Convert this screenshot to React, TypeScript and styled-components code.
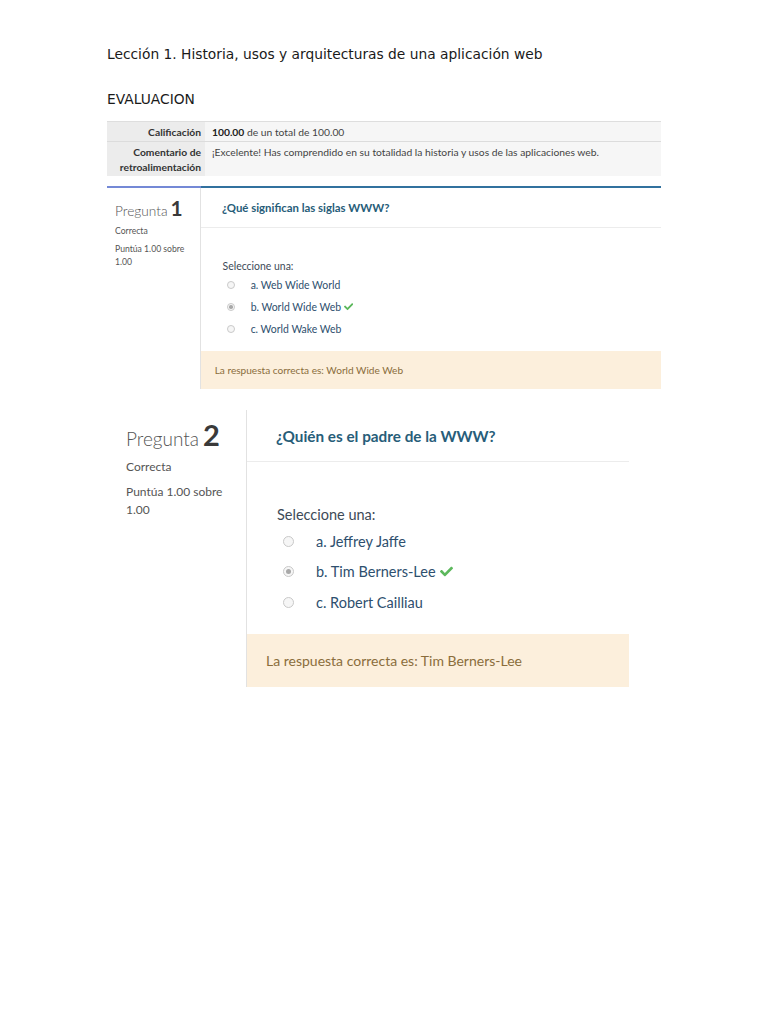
import React from "react";
import styled, { createGlobalStyle } from "styled-components";
import { FaCheck } from "react-icons/fa";

const Global = createGlobalStyle`
  html, body { margin: 0; padding: 0; background: #ffffff; }
  body { font-family: "DejaVu Sans", sans-serif; }
`;

const Page = styled.div`
  width: 768px;
  min-height: 1024px;
  padding: 45px 0 0 107px;
  box-sizing: border-box;
  display: flex;
  flex-direction: column;
`;

const DocText = styled.p<{ $mt: number }>`
  margin: ${(p) => p.$mt}px 0 0 0;
  font-family: "DejaVu Sans", sans-serif;
  font-size: 13.8px;
  line-height: 18px;
  color: #1a1a1a;
`;

const Shot = styled.div<{ $w: number; $mt: number; $ml: number }>`
  width: ${(p) => p.$w}px;
  margin-top: ${(p) => p.$mt}px;
  margin-left: ${(p) => p.$ml}px;
  font-family: Lato, "Open Sans", sans-serif;
  display: flex;
  flex-direction: column;
`;

const Summary = styled.div`
  display: grid;
  grid-template-columns: 98px 1fr;
  border-top: 1px solid #dedede;
  font-size: 10.3px;
  color: #333;
`;

const SumLabel = styled.div<{ $h: number; $top?: boolean }>`
  background: #ececec;
  height: ${(p) => p.$h}px;
  box-sizing: border-box;
  padding: 3px 4px 0 0;
  text-align: right;
  font-weight: 700;
  line-height: 15px;
  border-top: ${(p) => (p.$top ? "1px solid #dcdcdc" : "none")};
`;

const SumValue = styled.div<{ $h: number; $top?: boolean }>`
  background: #f6f6f6;
  height: ${(p) => p.$h}px;
  box-sizing: border-box;
  padding: 3px 0 0 7px;
  line-height: 15px;
  color: #444;
  border-top: ${(p) => (p.$top ? "1px solid #dcdcdc" : "none")};
  b { color: #222; }
`;

const Question = styled.div<{ $left: number; $top: boolean; $mt: number }>`
  display: grid;
  grid-template-columns: ${(p) => p.$left}px 1fr;
  margin-top: ${(p) => p.$mt}px;
  border-top: ${(p) => (p.$top ? "2px solid #31719e" : "none")};
  position: relative;
`;

const TopAccent = styled.div<{ $w: number }>`
  position: absolute;
  left: 0;
  top: -2px;
  width: ${(p) => p.$w}px;
  height: 2px;
  background: #7489d6;
`;

const Info = styled.div<{ $k: number; $pl: number; $pt: number }>`
  border-right: 1px solid #e2e2e2;
  padding: ${(p) => p.$pt}px 0 0 ${(p) => p.$pl}px;
  display: flex;
  flex-direction: column;
`;

const QNo = styled.div<{ $k: number }>`
  font-size: ${(p) => 19 * p.$k}px;
  line-height: ${(p) => 28 * p.$k}px;
  color: #555;
  font-weight: 300;
  span {
    font-size: ${(p) => 29 * p.$k}px;
    font-weight: 700;
    color: #3a3a3a;
    margin-left: ${(p) => 4 * p.$k}px;
  }
`;

const State = styled.div<{ $k: number; $mt: number }>`
  margin-top: ${(p) => p.$mt * p.$k}px;
  font-size: ${(p) => 12 * p.$k}px;
  line-height: ${(p) => 18 * p.$k}px;
  color: #555;
`;

const Content = styled.div`
  display: flex;
  flex-direction: column;
`;

const QHead = styled.div<{ $k: number; $h: number; $fs: number }>`
  height: ${(p) => p.$h}px;
  box-sizing: border-box;
  border-bottom: 1px solid #ececec;
  display: flex;
  align-items: center;
  padding-left: ${(p) => 29 * p.$k}px;
  font-size: ${(p) => p.$fs}px;
  font-weight: 700;
  color: #275d79;
`;

const Body = styled.div<{ $k: number }>`
  padding: ${(p) => 43 * p.$k}px 0 0 ${(p) => 30 * p.$k}px;
  display: flex;
  flex-direction: column;
`;

const Prompt = styled.div<{ $k: number }>`
  font-size: ${(p) => 14.5 * p.$k}px;
  line-height: ${(p) => 20 * p.$k}px;
  color: #3d4a57;
  margin-bottom: ${(p) => 1 * p.$k}px;
`;

const Option = styled.div<{ $k: number }>`
  height: ${(p) => 30.5 * p.$k}px;
  display: flex;
  align-items: center;
  font-size: ${(p) => 14.5 * p.$k}px;
  color: #2e4f6e;
`;

const Radio = styled.span<{ $k: number; $on?: boolean }>`
  width: ${(p) => 11 * p.$k}px;
  height: ${(p) => 11 * p.$k}px;
  margin-left: ${(p) => 6 * p.$k}px;
  margin-right: ${(p) => 22 * p.$k}px;
  border-radius: 50%;
  border: 1px solid #c9c9c9;
  background: #f6f6f6;
  box-sizing: border-box;
  display: inline-flex;
  align-items: center;
  justify-content: center;
  &::after {
    content: "";
    display: ${(p) => (p.$on ? "block" : "none")};
    width: ${(p) => 5 * p.$k}px;
    height: ${(p) => 5 * p.$k}px;
    border-radius: 50%;
    background: #a8a8a8;
  }
`;

const Tick = styled(FaCheck)<{ $k: number }>`
  color: #5cb85c;
  width: ${(p) => 13 * p.$k}px;
  height: ${(p) => 13 * p.$k}px;
  margin-left: ${(p) => 4 * p.$k}px;
`;

const Feedback = styled.div<{ $k: number; $mt: number }>`
  margin-top: ${(p) => p.$mt}px;
  height: ${(p) => 53 * p.$k}px;
  background: #fcefdc;
  display: flex;
  align-items: center;
  padding-left: ${(p) => 19 * p.$k}px;
  font-size: ${(p) => 14 * p.$k}px;
  color: #8a6d3b;
`;

type Q = {
  n: number;
  k: number;
  left: number;
  pl: number;
  pt: number;
  head: number;
  qfs: number;
  fbMt: number;
  q: string;
  opts: string[];
  correct: number;
  answer: string;
};

const QuestionCard: React.FC<{ d: Q; top: boolean; mt: number }> = ({ d, top, mt }) => (
  <Question $left={d.left} $top={top} $mt={mt}>
    {top && <TopAccent $w={d.left} />}
    <Info $k={d.k} $pl={d.pl} $pt={d.pt}>
      <QNo $k={d.k}>
        Pregunta<span>{d.n}</span>
      </QNo>
      <State $k={d.k} $mt={5}>Correcta</State>
      <State $k={d.k} $mt={7}>
        Puntúa 1.00 sobre
        <br />
        1.00
      </State>
    </Info>
    <Content>
      <QHead $k={d.k} $h={d.head} $fs={d.qfs}>{d.q}</QHead>
      <Body $k={d.k}>
        <Prompt $k={d.k}>Seleccione una:</Prompt>
        {d.opts.map((o, i) => (
          <Option key={o} $k={d.k}>
            <Radio $k={d.k} $on={i === d.correct} />
            {o}
            {i === d.correct && <Tick $k={d.k} />}
          </Option>
        ))}
      </Body>
      <Feedback $k={d.k} $mt={d.fbMt}>La respuesta correcta es: {d.answer}</Feedback>
    </Content>
  </Question>
);

const q1: Q = {
  n: 1,
  k: 0.72,
  left: 94,
  pl: 8,
  pt: 10,
  head: 40,
  qfs: 11.4,
  fbMt: 11,
  q: "¿Qué significan las siglas WWW?",
  opts: ["a. Web Wide World", "b. World Wide Web", "c. World Wake Web"],
  correct: 1,
  answer: "World Wide Web",
};

const q2: Q = {
  n: 2,
  k: 1,
  left: 137,
  pl: 16,
  pt: 11,
  head: 52,
  qfs: 15.3,
  fbMt: 16,
  q: "¿Quién es el padre de la WWW?",
  opts: ["a. Jeffrey Jaffe", "b. Tim Berners-Lee", "c. Robert Cailliau"],
  correct: 1,
  answer: "Tim Berners-Lee",
};

export default function App() {
  return (
    <>
      <Global />
      <Page>
        <DocText $mt={0}>Lección 1. Historia, usos y arquitecturas de una aplicación web</DocText>
        <DocText $mt={27}>EVALUACION</DocText>
        <Shot $w={554} $mt={13} $ml={0}>
          <Summary>
            <SumLabel $h={19}>Calificación</SumLabel>
            <SumValue $h={19}>
              <b>100.00</b> de un total de 100.00
            </SumValue>
            <SumLabel $h={35} $top>
              Comentario de
              <br />
              retroalimentación
            </SumLabel>
            <SumValue $h={35} $top>
              ¡Excelente! Has comprendido en su totalidad la historia y usos de las aplicaciones web.
            </SumValue>
          </Summary>
          <QuestionCard d={q1} top mt={10} />
        </Shot>
        <Shot $w={519} $mt={21} $ml={3}>
          <QuestionCard d={q2} top={false} mt={0} />
        </Shot>
      </Page>
    </>
  );
}
